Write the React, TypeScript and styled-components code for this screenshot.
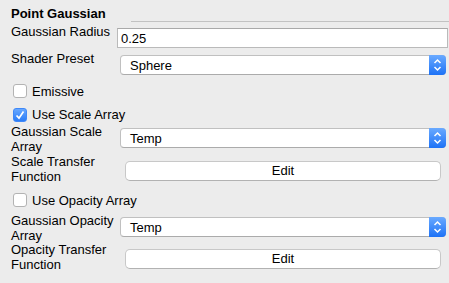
import styled, { createGlobalStyle } from "styled-components";

const Global = createGlobalStyle`
  html, body {
    margin: 0;
    padding: 0;
    background: #ececec;
  }
  body {
    font-family: "Liberation Sans", Arial, sans-serif;
    font-size: 13px;
    color: #000;
  }
`;

const Chevrons = () => (
  <svg width="17" height="20" viewBox="0 0 17 20">
    <path d="M5.5 8 L8.5 5 L11.5 8" fill="none" stroke="#fff" strokeWidth="1.5" />
    <path d="M5.5 12 L8.5 15 L11.5 12" fill="none" stroke="#fff" strokeWidth="1.5" />
  </svg>
);

const Tick = () => (
  <svg width="14" height="14" viewBox="0 0 14 14">
    <path d="M3.5 7.5 L6 10.2 L10.5 3.6" fill="none" stroke="#fff" strokeWidth="1.7" />
  </svg>
);

const App = () => {
  return (
    <>
      <Global />
      <S.Panel>
        <S.Header>
          <S.Title>Point Gaussian</S.Title>
          <S.Rule />
        </S.Header>

        <S.Row $h={31} $pt={4}>
          <S.Label>Gaussian Radius</S.Label>
          <S.TextInput defaultValue="0.25" readOnly />
        </S.Row>

        <S.Row $h={26}>
          <S.Label>Shader Preset</S.Label>
          <S.Select>
            <span>Sphere</span>
            <S.Arrow>
              <Chevrons />
            </S.Arrow>
          </S.Select>
        </S.Row>

        <S.CheckRow $h={24}>
          <S.Box $checked={false} />
          <span>Emissive</span>
        </S.CheckRow>

        <S.CheckRow $h={23}>
          <S.Box $checked>
            <Tick />
          </S.Box>
          <span>Use Scale Array</span>
        </S.CheckRow>

        <S.Row $h={30}>
          <S.Label>
            Gaussian Scale
            <br />
            Array
          </S.Label>
          <S.Select>
            <span>Temp</span>
            <S.Arrow>
              <Chevrons />
            </S.Arrow>
          </S.Select>
        </S.Row>

        <S.Row $h={31}>
          <S.Label>
            Scale Transfer
            <br />
            Function
          </S.Label>
          <S.EditButton>Edit</S.EditButton>
        </S.Row>

        <S.CheckRow $h={26}>
          <S.Box $checked={false} />
          <span>Use Opacity Array</span>
        </S.CheckRow>

        <S.Row $h={31} $pt={2}>
          <S.Label>
            Gaussian Opacity
            <br />
            Array
          </S.Label>
          <S.Select>
            <span>Temp</span>
            <S.Arrow>
              <Chevrons />
            </S.Arrow>
          </S.Select>
        </S.Row>

        <S.Row $h={39}>
          <S.Label>
            Opacity Transfer
            <br />
            Function
          </S.Label>
          <S.EditButton>Edit</S.EditButton>
        </S.Row>
      </S.Panel>
    </>
  );
};

export default App;

const S = {
  Panel: styled.div`
    width: 449px;
    height: 283px;
    padding-left: 11px;
    box-sizing: border-box;
    overflow: hidden;
    display: flex;
    flex-direction: column;
  `,

  Header: styled.div`
    display: flex;
    align-items: flex-start;
    height: 22px;
    flex: none;
  `,

  Title: styled.div`
    padding-top: 6px;
    line-height: 16px;
    font-weight: bold;
  `,

  Rule: styled.div`
    flex: 1;
    align-self: flex-end;
    margin-left: 25px;
    border-bottom: 1px solid #c2c2c2;
  `,

  Row: styled.div<{ $h: number; $pt?: number }>`
    display: flex;
    align-items: flex-start;
    flex: none;
    height: ${(p) => p.$h}px;
    padding-top: ${(p) => p.$pt ?? 0}px;
    box-sizing: border-box;
  `,

  Label: styled.div`
    width: 106px;
    flex: none;
    margin-top: -1px;
    line-height: 14.5px;
    white-space: nowrap;
  `,

  TextInput: styled.input`
    flex: 1;
    min-width: 0;
    height: 20px;
    box-sizing: border-box;
    margin: 2px 1px 0 0;
    padding: 0 3px;
    border: 1px solid #bababa;
    border-top-color: #a9a9a9;
    background: #fff;
    font: inherit;
    color: #000;
    outline: none;
  `,

  Select: styled.div`
    flex: 1;
    display: flex;
    align-items: center;
    height: 20px;
    box-sizing: border-box;
    margin: 2px 3px 0 3px;
    padding-left: 9px;
    border: 1px solid #c0c0c0;
    border-bottom-color: #ababab;
    border-radius: 4px;
    background: #fff;
  `,

  Arrow: styled.div`
    display: flex;
    align-self: stretch;
    margin: -1px -1px -1px auto;
    width: 17px;
    border-radius: 0 4px 4px 0;
    background: linear-gradient(#6aaaff, #1d72f6);
  `,

  EditButton: styled.button`
    flex: 1;
    height: 20px;
    box-sizing: border-box;
    margin: 5px 8px 0 8px;
    padding: 0;
    border: 1px solid #c8c8c8;
    border-bottom-color: #b2b2b2;
    border-radius: 5px;
    background: #fff;
    font: inherit;
    color: #000;
    line-height: 18px;
  `,

  CheckRow: styled.div<{ $h: number }>`
    display: flex;
    align-items: center;
    gap: 5px;
    flex: none;
    height: ${(p) => p.$h}px;
    padding-left: 2px;
  `,

  Box: styled.div<{ $checked: boolean }>`
    width: 14px;
    height: 14px;
    box-sizing: border-box;
    border-radius: 3px;
    border: 1px solid ${(p) => (p.$checked ? "#3f88f8" : "#b3b3b3")};
    background: ${(p) =>
      p.$checked ? "linear-gradient(#68a8ff, #2a7cf7)" : "#fff"};
    display: flex;
    align-items: center;
    justify-content: center;
    svg {
      margin: -1px;
    }
  `,
};
